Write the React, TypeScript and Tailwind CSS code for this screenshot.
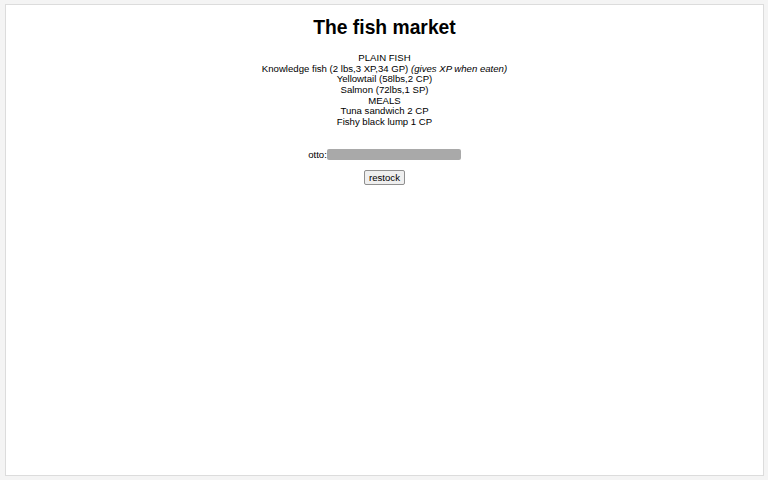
export default function App() {
  return (
    <div className="h-[480px] w-[768px] bg-[#f4f4f4] pb-[4px] pl-[5px] pr-[4px] pt-[4px] font-['Liberation_Sans',Arial,sans-serif] text-black">
      <div className="flex h-full flex-col items-center border border-[#dcdcdc] bg-white">
        <h1 className="mt-[11px] text-[19.3px] font-bold leading-[24px]">The fish market</h1>
        <div className="mt-[13px] text-center text-[9.6px] leading-[10.67px]">
          <div>PLAIN FISH</div>
          <div>
            Knowledge fish (2 lbs,3 XP,34 GP) <i>(gives XP when eaten)</i>
          </div>
          <div>Yellowtail (58lbs,2 CP)</div>
          <div>Salmon (72lbs,1 SP)</div>
          <div>MEALS</div>
          <div>Tuna sandwich 2 CP</div>
          <div>Fishy black lump 1 CP</div>
        </div>
        <label className="mt-[20px] flex items-center text-[9.6px]">
          otto:
          <input className="h-[11px] w-[134px] rounded-[2px] bg-[#a9a9a9] outline-none" />
        </label>
        <button className="mt-[8px] rounded-[2px] border border-[#8f8f8f] bg-[#efefef] px-[4px] py-[1px] text-[9.6px] leading-[11px]">
          restock
        </button>
      </div>
    </div>
  );
}
